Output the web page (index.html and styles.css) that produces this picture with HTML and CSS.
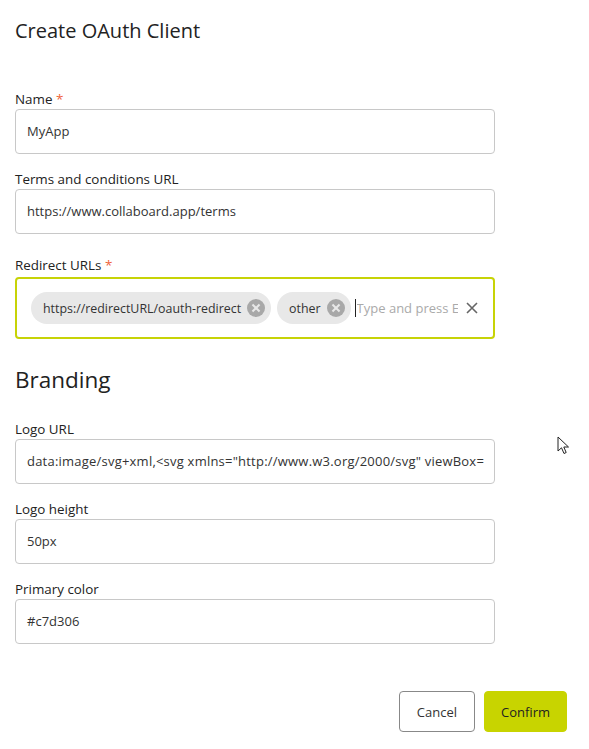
FILE: index.html
```html
<!DOCTYPE html>
<html lang="en">
<head>
  <meta charset="UTF-8">
  <meta name="viewport" content="width=device-width, initial-scale=1.0">
  <title> Create OAuth Client </title>
  <link rel="stylesheet" href="styles.css">
</head>
<body>
  <div class="dialog">
    <h2 class="title">Create OAuth Client</h2>
    <form class="form">
      <div class="field">
        <label>Name <span class="req">*</span></label>
        <div class="input">MyApp</div>
      </div>
      <div class="field">
        <label>Terms and conditions URL</label>
        <div class="input">https://www.collaboard.app/terms</div>
      </div>
      <div class="field field-tags">
        <label>Redirect URLs <span class="req">*</span></label>
        <div class="tags">
          <span class="tag">https://redirectURL/oauth-redirect <i class="tag-x"></i></span>
          <span class="tag">other <i class="tag-x"></i></span>
          <span class="caret"></span>
          <span class="placeholder">Type and press Enter</span>
          <svg class="clear" width="14" height="14" viewBox="0 0 14 14"><path d="M2 2L12 12M12 2L2 12" stroke="#666" stroke-width="1.6"/></svg>
        </div>
      </div>
      <h3 class="section">Branding</h3>
      <div class="field">
        <label>Logo URL</label>
        <div class="input input-long">data:image/svg+xml,&lt;svg xmlns="http://www.w3.org/2000/svg" viewBox=</div>
      </div>
      <div class="field">
        <label>Logo height</label>
        <div class="input">50px</div>
      </div>
      <div class="field">
        <label>Primary color</label>
        <div class="input">#c7d306</div>
      </div>
    </form>
    <div class="actions">
      <button class="btn">Cancel</button>
      <button class="btn btn-primary">Confirm</button>
    </div>
  </div>
  <svg class="pointer" width="14" height="20" viewBox="0 0 14 20"><path d="M1 1L1 15L4.5 11.8L7 17.5L9.2 16.5L6.8 11L11.5 11Z" fill="#fff" stroke="#222" stroke-width="1" stroke-linejoin="round"/></svg>
</body>
</html>
```

FILE: styles.css
```css
* {
  margin: 0;
  padding: 0;
  box-sizing: border-box;
}

body {
  background-color: #fff;
  color: #222;
  font-family: "Open Sans", "Noto Sans", sans-serif;
}

.dialog {
  width: 589px;
  padding: 18px 22px 0 15px;
}

.title {
  font-size: 20px;
  font-weight: 400;
  line-height: 26px;
  color: #222;
}

.form {
  width: 480px;
  margin-top: 46px;
}

.field {
  margin-bottom: 16px;
}

.field label {
  display: block;
  font-size: 13.4px;
  font-weight: 500;
  line-height: 19px;
  color: #222;
}

.req {
  color: #f0643c;
}

.input {
  height: 45px;
  padding: 0 11px;
  border: 1px solid #c8c8c8;
  border-radius: 4px;
  font-size: 13px;
  line-height: 43px;
  color: #333;
  white-space: nowrap;
  overflow: hidden;
}

.input-long {
  letter-spacing: .22px;
}

.field-tags {
  margin-top: 22px;
  margin-bottom: 0;
}

.field-tags label {
  margin-bottom: 2px;
}

.tags {
  display: flex;
  align-items: center;
  height: 62px;
  padding: 0 14px;
  border: 2px solid #c7d306;
  border-radius: 4px;
}

.tag {
  display: flex;
  align-items: center;
  height: 32px;
  padding: 0 6px 0 12px;
  margin-right: 6px;
  background-color: #e8e8e8;
  border-radius: 16px;
  font-size: 12.4px;
  color: #333;
  white-space: nowrap;
}

.tag-x {
  position: relative;
  width: 18px;
  height: 18px;
  margin-left: 6px;
  border-radius: 50%;
  background-color: #a8a8a8;
}

.tag-x::before,
.tag-x::after {
  content: "";
  position: absolute;
  left: 4px;
  top: 8px;
  width: 10px;
  height: 2px;
  background-color: #e8e8e8;
  transform: rotate(45deg);
}

.tag-x::after {
  transform: rotate(-45deg);
}

.caret {
  width: 1px;
  height: 18px;
  margin-left: -2px;
  margin-right: 1px;
  background-color: #222;
}

.placeholder {
  width: 101px;
  overflow: hidden;
  white-space: nowrap;
  font-size: 13px;
  color: #aaa;
}

.clear {
  margin-left: auto;
  margin-right: 0;
}

.section {
  margin: 25px 0 24px;
  font-size: 22.5px;
  font-weight: 500;
  line-height: 32px;
  color: #222;
}

.actions {
  display: flex;
  justify-content: flex-end;
  margin-top: 47px;
  width: 552px;
}

.btn {
  height: 41px;
  padding: 0 17px;
  margin-left: 9px;
  border: 1px solid #888;
  border-radius: 4px;
  background-color: #fff;
  font-family: inherit;
  font-size: 13px;
  color: #333;
}

.btn-primary {
  padding: 0 16px;
  border-color: #c8d400;
  background-color: #c8d400;
  color: #222;
}

.pointer {
  position: absolute;
  left: 557px;
  top: 436px;
}
```
